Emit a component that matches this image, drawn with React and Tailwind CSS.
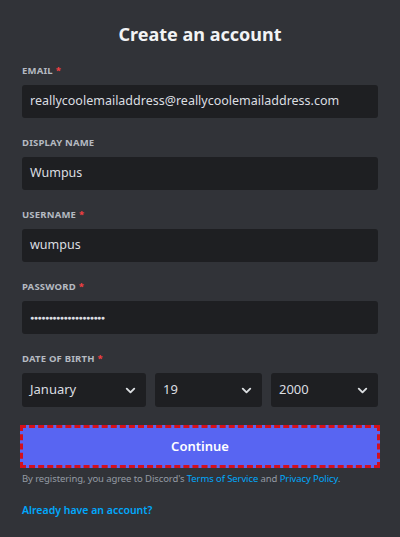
import { ChevronDown } from 'lucide-react'

const FONT = { fontFamily: '"Noto Sans", "Open Sans", sans-serif' }

function Label({ children, required }) {
  return (
    <div className="h-[12px] flex items-center text-[9.5px] font-bold uppercase tracking-[0.02em] text-[#b5bac1] leading-none">
      {children}
      {required && <span className="ml-[3px] text-[#f23f42]">*</span>}
    </div>
  )
}

function Field({ label, required, value, mono }) {
  return (
    <div className="flex flex-col gap-2">
      <Label required={required}>{label}</Label>
      <div className="h-[33px] bg-[#1e1f22] rounded-[3px] flex items-center px-2 text-[12.5px] text-[#dbdee1]">
        {mono ? (
          <span className="text-[7px] tracking-[-0.5px] leading-none">{'●'.repeat(20)}</span>
        ) : (
          value
        )}
      </div>
    </div>
  )
}

function Select({ value, className }) {
  return (
    <div className={`h-[34px] bg-[#1e1f22] rounded-[3px] flex items-center justify-between pl-2 pr-2 text-[13px] text-[#dbdee1] ${className}`}>
      <span>{value}</span>
      <ChevronDown size={15} strokeWidth={3} className="text-[#dbdee1]" />
    </div>
  )
}

export default function App() {
  return (
    <div style={FONT} className="w-[400px] h-[537px] bg-[#313338] px-[22px] pt-[22px] flex flex-col overflow-hidden">
      <h1 className="h-[24px] text-center text-[18px] font-bold text-[#f2f3f5] leading-[24px]">Create an account</h1>

      <div className="mt-[19px] flex flex-col gap-[19px]">
        <Field label="Email" required value="reallycoolemailaddress@reallycoolemailaddress.com" />
        <Field label="Display Name" value="Wumpus" />
        <Field label="Username" required value="wumpus" />
        <Field label="Password" required mono />
        <div className="flex flex-col gap-2">
          <Label required>Date of Birth</Label>
          <div className="flex gap-[9px]">
            <Select value="January" className="w-[124px]" />
            <Select value="19" className="w-[107px]" />
            <Select value="2000" className="flex-1" />
          </div>
        </div>
      </div>

      <button className="mt-[18px] -mx-[2px] h-[43px] border-[3px] border-dashed border-[#d4101c] bg-[#5865f2] text-white text-[13px] font-semibold flex items-center justify-center">
        Continue
      </button>

      <p className="mt-[5px] text-[9.5px] text-[#949ba4] leading-[12px] tracking-[-0.1px]">
        By registering, you agree to Discord's <span className="text-[#00a8fc]">Terms of Service</span> and <span className="text-[#00a8fc]">Privacy Policy</span>.
      </p>

      <a className="mt-[19px] text-[10.5px] font-semibold text-[#00a8fc] leading-[12px]">Already have an account?</a>
    </div>
  )
}
